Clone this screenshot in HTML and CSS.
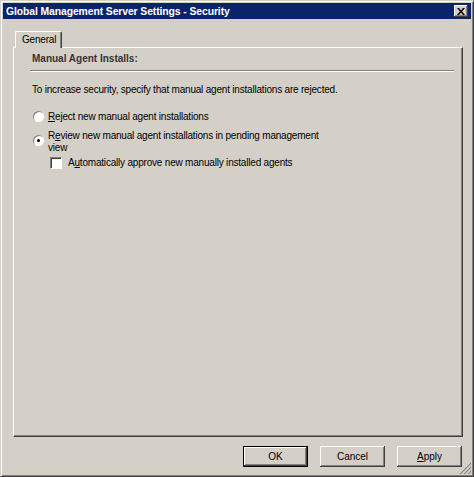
FILE: index.html
```html
<!DOCTYPE html>
<html>
<head>
    <link rel="stylesheet" href="styles.css">
</head>
<body>

<div class="window">
    <div class="titlebar">
        <span class="title">Global Management Server Settings - Security</span>
        <button class="close-btn">
            <svg width="8" height="7" viewBox="0 0 8 7">
                <path d="M0 0h2l2 2.5L6 0h2L5 3.5 8 7H6L4 4.5 2 7H0l3-3.5z" fill="#000"/>
            </svg>
        </button>
    </div>

    <div class="body">
        <div class="tabs">
            <div class="tab active">General</div>
        </div>
        <div class="panel">
            <div class="group-title">Manual Agent Installs:</div>
            <div class="rule"></div>
            <p class="intro">To increase security, specify that manual agent installations are rejected.</p>

            <label class="option">
                <span class="radio"></span>
                <span><u>R</u>eject new manual agent installations</span>
            </label>
            <label class="option">
                <span class="radio checked"></span>
                <span>R<u>e</u>view new manual agent installations in pending management view</span>
            </label>
            <label class="option sub">
                <span class="check"></span>
                <span>A<u>u</u>tomatically approve new manually installed agents</span>
            </label>
        </div>

        <div class="buttons">
            <button class="btn default">OK</button>
            <button class="btn">Cancel</button>
            <button class="btn"><u>A</u>pply</button>
        </div>
    </div>

    <svg class="grip" width="12" height="12" viewBox="0 0 12 12">
        <path d="M11 1L1 11M11 5L5 11M11 9L9 11" stroke="#fff" stroke-width="1"/>
        <path d="M12 1L1 12M12 5L5 12M12 9L9 12" stroke="#808080" stroke-width="1.2"/>
    </svg>
</div>

</body>
</html>
```

FILE: styles.css
```css
body, html {
    margin: 0;
    height: 100%;
    background-color: #d4d0c8;
    font-family: Tahoma, "Liberation Sans", Arial, sans-serif;
    font-size: 10px;
    letter-spacing: -0.2px;
    color: #000;
}

.window {
    position: relative;
    box-sizing: border-box;
    width: 474px;
    height: 477px;
    background-color: #d4d0c8;
    border-top: 1px solid #d4d0c8;
    border-left: 1px solid #d4d0c8;
    border-right: 1px solid #404040;
    border-bottom: 1px solid #404040;
    box-shadow: inset 1px 1px 0 #fff, inset -1px -1px 0 #808080;
    padding: 2px;
    display: flex;
    flex-direction: column;
}

.titlebar {
    height: 16px;
    background-color: #0a246a;
    display: flex;
    align-items: center;
    justify-content: space-between;
    padding: 0 3px 0 3px;
}

.title {
    color: #fff;
    font-weight: bold;
    font-size: 10.4px;
    letter-spacing: -0.1px;
}

.close-btn {
    width: 14px;
    height: 12px;
    padding: 0;
    margin: 0;
    background-color: #d4d0c8;
    border: none;
    box-shadow: inset -1px -1px 0 #404040, inset 1px 1px 0 #fff, inset -2px -2px 0 #808080;
    display: flex;
    align-items: center;
    justify-content: center;
}

.body {
    flex: 1;
    display: flex;
    flex-direction: column;
    padding: 12px 8px 0 10px;
}

.tabs {
    display: flex;
    padding-left: 2px;
}

.tab {
    padding: 1px 5px 1px 6px;
    height: 14px;
    line-height: 14px;
    border-top: 1px solid #fff;
    border-left: 1px solid #fff;
    border-right: 1px solid #404040;
    box-shadow: inset -1px 0 0 #808080;
    border-radius: 2px 2px 0 0;
    margin-bottom: -1px;
    background-color: #d4d0c8;
    position: relative;
    z-index: 1;
}

.panel {
    height: 383px;
    border-top: 1px solid #fff;
    border-left: 1px solid #fff;
    border-right: 1px solid #404040;
    border-bottom: 1px solid #404040;
    box-shadow: inset -1px -1px 0 #808080;
    padding: 5px 8px 0 18px;
}

.group-title {
    font-weight: bold;
    color: #333;
    line-height: 12px;
    letter-spacing: 0;
}

.rule {
    height: 0;
    border-top: 1px solid #808080;
    border-bottom: 1px solid #fff;
    margin: 5px 0 0 -2px;
}

.intro {
    line-height: 12px;
    margin: 12px 0 15px;
}

.option {
    display: flex;
    align-items: flex-start;
    gap: 4px;
    line-height: 12px;
    width: 300px;
}

.option + .option {
    margin-top: 7px;
}

.radio {
    flex: none;
    width: 11px;
    height: 11px;
    border-radius: 50%;
    background: #fff;
    box-shadow: inset 1px 1px 0 #808080, inset -1px -1px 0 #fff;
    position: relative;
    margin-left: 1px;
}

.radio.checked {
    margin-top: 5px;
}

.radio.checked::after {
    content: "";
    position: absolute;
    left: 4px;
    top: 4px;
    width: 3px;
    height: 3px;
    border-radius: 50%;
    background: #000;
}

.option.sub {
    margin-left: 18px;
    margin-top: 3px;
}

.check {
    flex: none;
    width: 10px;
    height: 10px;
    background: #fff;
    border-top: 1px solid #808080;
    border-left: 1px solid #808080;
    border-right: 1px solid #fff;
    border-bottom: 1px solid #fff;
    box-shadow: inset 1px 1px 0 #404040;
    margin-right: 2px;
}

.buttons {
    display: flex;
    justify-content: flex-end;
    gap: 12px;
    padding: 9px 1px 0 0;
}

.btn {
    width: 65px;
    height: 21px;
    padding: 0;
    font-family: inherit;
    font-size: 10px;
    color: #000;
    background-color: #d4d0c8;
    border: none;
    box-shadow: inset -1px -1px 0 #404040, inset 1px 1px 0 #fff, inset -2px -2px 0 #808080;
}

.btn.default {
    border: 1px solid #000;
}

.grip {
    position: absolute;
    right: 2px;
    bottom: 2px;
}
```
